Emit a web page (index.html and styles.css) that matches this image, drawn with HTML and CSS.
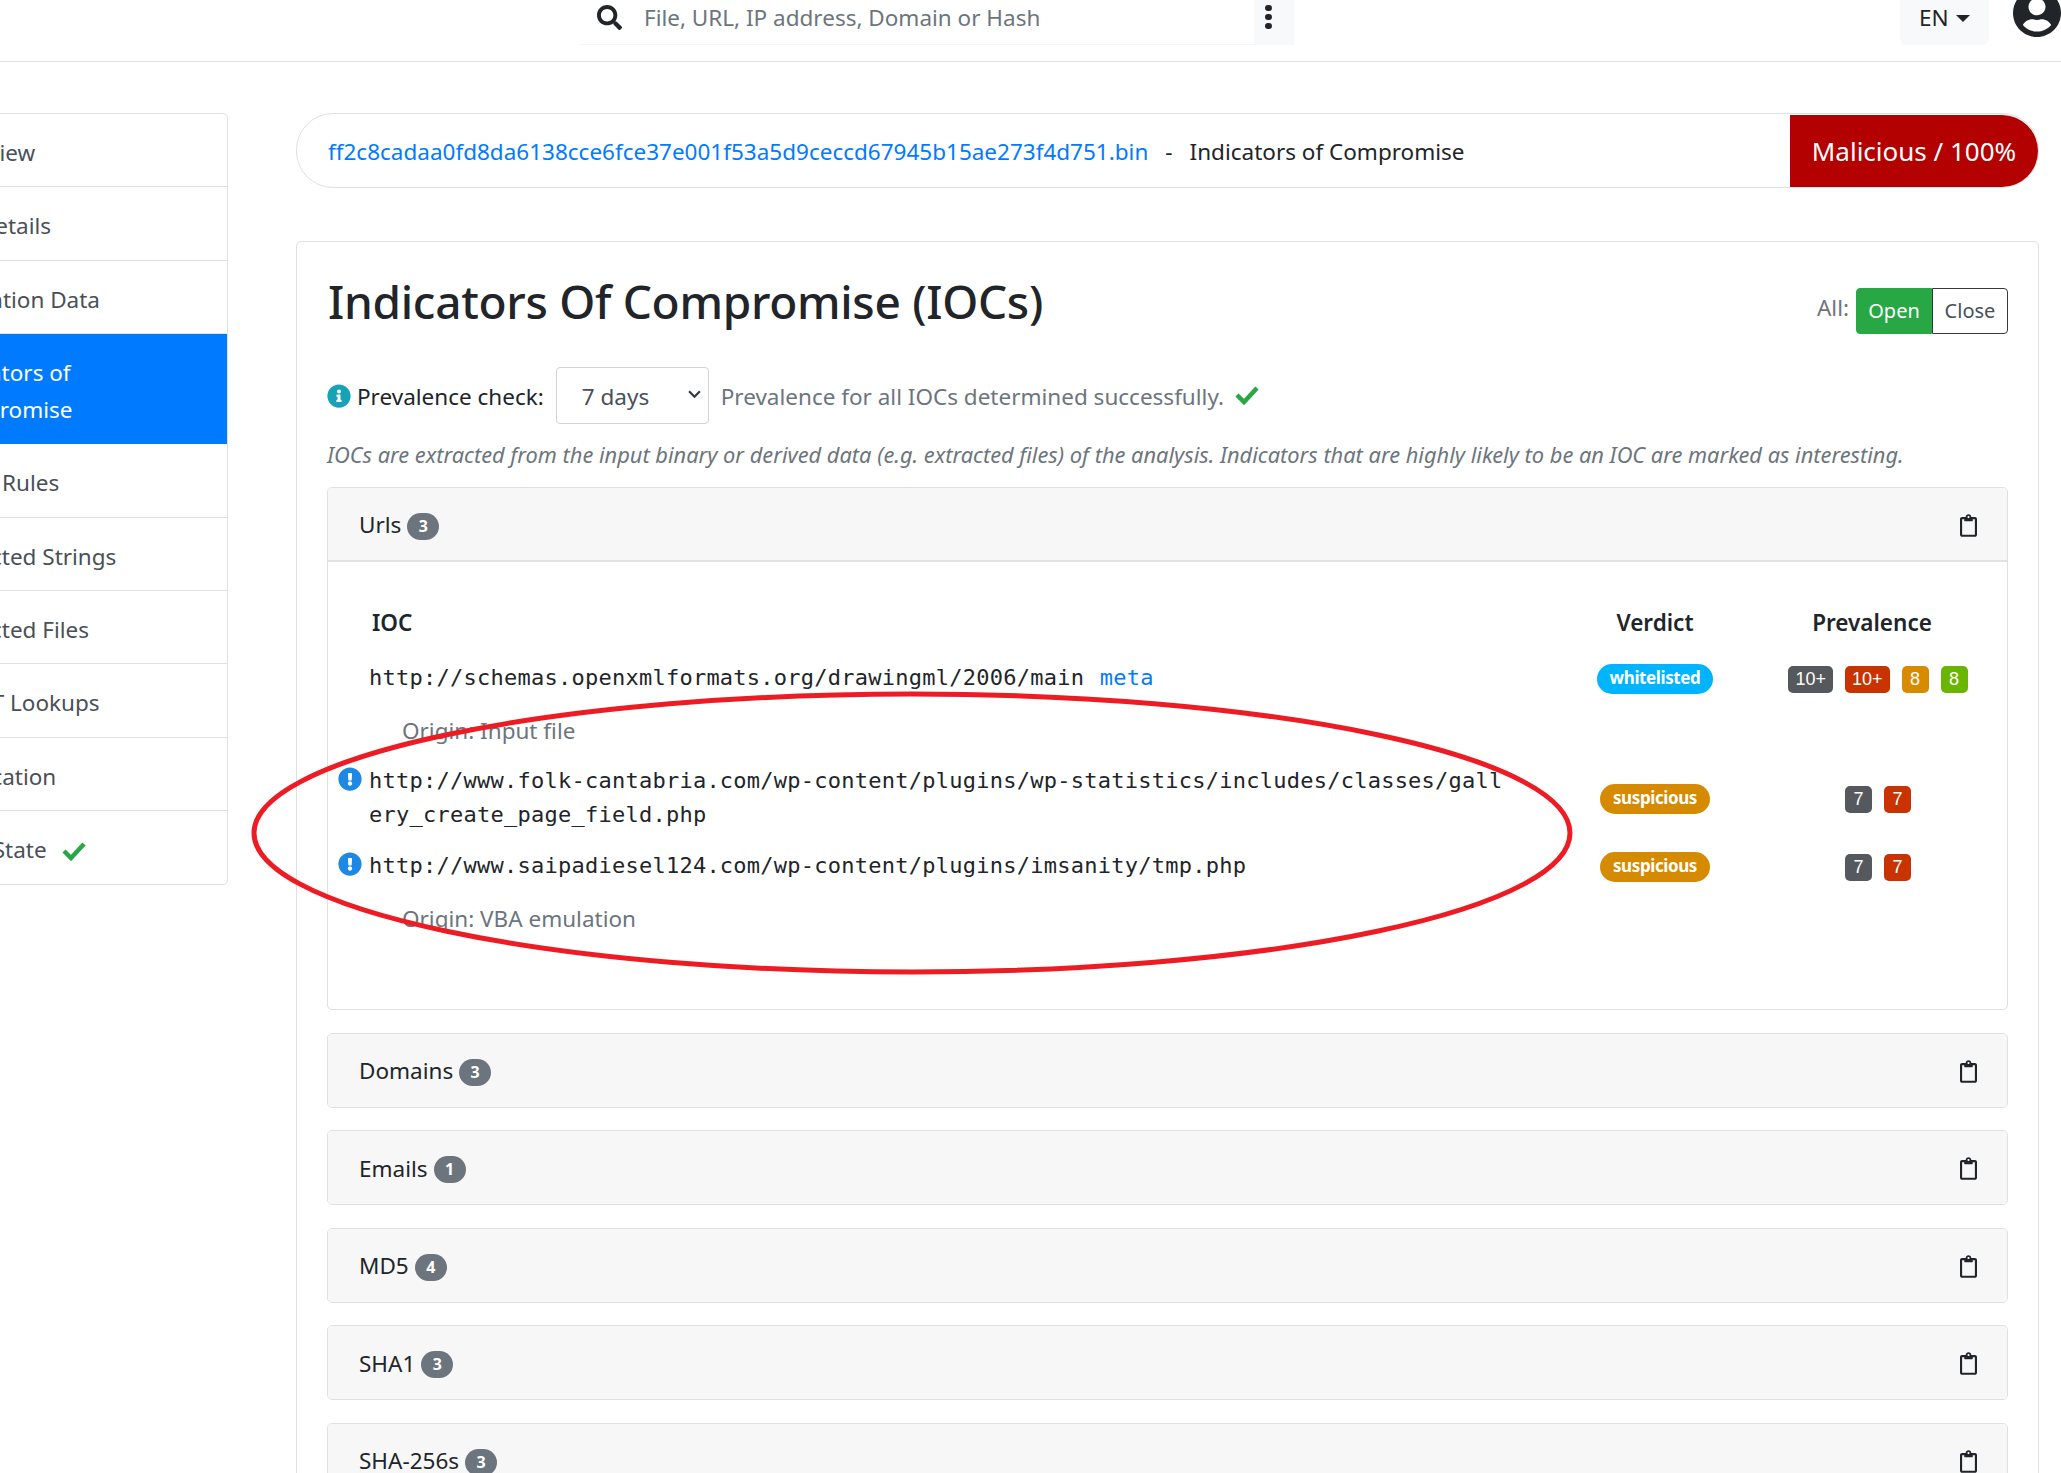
FILE: index.html
```html
<!DOCTYPE html>
<html lang="en">
<head>
<meta charset="utf-8">
<title>Indicators of Compromise</title>
<link rel="stylesheet" href="styles.css">
</head>
<body>
<header class="topbar">
  <div class="search">
    <svg class="search-icon" viewBox="0 0 512 512"><path d="M505 442.7L405.3 343c-4.5-4.5-10.6-7-17-7H372c27.6-35.3 44-79.7 44-128C416 93.1 322.9 0 208 0S0 93.1 0 208s93.1 208 208 208c48.3 0 92.7-16.4 128-44v16.3c0 6.4 2.5 12.5 7 17l99.7 99.7c9.4 9.4 24.6 9.4 33.9 0l28.3-28.3c9.4-9.4 9.4-24.6.1-34zM208 336c-70.7 0-128-57.2-128-128 0-70.7 57.2-128 128-128 70.7 0 128 57.2 128 128 0 70.7-57.2 128-128 128z"/></svg>
    <span class="search-text">File, URL, IP address, Domain or Hash</span>
    <span class="kebab"><i></i><i></i><i></i></span>
  </div>
  <div class="lang">EN<span class="caret"></span></div>
  <svg class="avatar" viewBox="0 0 496 512"><path d="M248 8C111 8 0 119 0 256s111 248 248 248 248-111 248-248S385 8 248 8zm0 96c48.6 0 88 39.4 88 88s-39.4 88-88 88-88-39.4-88-88 39.4-88 88-88zm0 344c-58.7 0-111.3-26.6-146.5-68.2 18.8-35.4 55.6-59.8 98.5-59.8 2.4 0 4.8.4 7.1 1.1 13 4.2 26.6 6.9 40.9 6.9 14.3 0 28-2.7 40.9-6.9 2.3-.7 4.7-1.1 7.1-1.1 42.9 0 79.7 24.4 98.5 59.8C359.3 421.4 306.7 448 248 448z"/></svg>
</header>

<div class="layout">
  <nav class="sidenav">
    <a class="nav-item">Overview</a>
    <a class="nav-item">File Details</a>
    <a class="nav-item">Emulation Data</a>
    <a class="nav-item active">Indicators of Compromise</a>
    <a class="nav-item nav-wide">YARA Rules</a>
    <a class="nav-item">Extracted Strings</a>
    <a class="nav-item">Extracted Files</a>
    <a class="nav-item">OSINT Lookups</a>
    <a class="nav-item">Verification</a>
    <a class="nav-item">Final State <svg class="check" viewBox="0 0 24 20"><polyline points="2,10 9,17 22,3"/></svg></a>
  </nav>

  <main class="content">
    <div class="crumb">
      <span class="crumb-text"><a class="link">ff2c8cadaa0fd8da6138cce6fce37e001f53a5d9ceccd67945b15ae273f4d751.bin</a><span class="sep">-</span>Indicators of Compromise</span>
      <span class="verdict-pill">Malicious / 100%</span>
    </div>

    <section class="panel">
      <div class="panel-head">
        <h1>Indicators Of Compromise (IOCs)</h1>
        <div class="all-toggle">
          <span class="all-label">All:</span>
          <span class="btn btn-open">Open</span><span class="btn btn-close">Close</span>
        </div>
      </div>

      <div class="prevalence">
        <svg class="info-icon" viewBox="0 0 512 512"><path d="M256 8C119.043 8 8 119.083 8 256c0 136.997 111.043 248 248 248s248-111.003 248-248C504 119.083 392.957 8 256 8zm0 110c23.196 0 42 18.804 42 42s-18.804 42-42 42-42-18.804-42-42 18.804-42 42-42zm56 254c0 6.627-5.373 12-12 12h-88c-6.627 0-12-5.373-12-12v-24c0-6.627 5.373-12 12-12h12v-64h-12c-6.627 0-12-5.373-12-12v-24c0-6.627 5.373-12 12-12h64c6.627 0 12 5.373 12 12v100h12c6.627 0 12 5.373 12 12v24z"/></svg>
        <span class="prev-label">Prevalence check:</span>
        <span class="select">7 days<svg class="chev" viewBox="0 0 12 8"><polyline points="1,1 6,6 11,1"/></svg></span>
        <span class="prev-note">Prevalence for all IOCs determined successfully.</span>
        <svg class="check check-lg" viewBox="0 0 24 20"><polyline points="2,10 9,17 22,3"/></svg>
      </div>

      <p class="intro">IOCs are extracted from the input binary or derived data (e.g. extracted files) of the analysis. Indicators that are highly likely to be an IOC are marked as interesting.</p>

      <div class="acc open">
        <div class="acc-head">
          <span class="acc-title">Urls<span class="count">3</span></span>
          <svg class="clip" viewBox="0 0 384 512"><path d="M336 64h-80c0-35.3-28.7-64-64-64s-64 28.7-64 64H48C21.5 64 0 85.5 0 112v352c0 26.5 21.5 48 48 48h288c26.5 0 48-21.5 48-48V112c0-26.5-21.5-48-48-48zM192 40c13.3 0 24 10.7 24 24s-10.7 24-24 24-24-10.7-24-24 10.7-24 24-24zm144 418c0 3.3-2.7 6-6 6H54c-3.3 0-6-2.7-6-6V118c0-3.3 2.7-6 6-6h42v36c0 6.6 5.4 12 12 12h168c6.6 0 12-5.4 12-12v-36h42c3.3 0 6 2.7 6 6z"/></svg>
        </div>
        <div class="acc-body">
          <div class="ioc-grid ioc-cols">
            <span></span>
            <span class="th th-ioc">IOC</span>
            <span class="th th-center">Verdict</span>
            <span class="th th-center th-prev">Prevalence</span>
          </div>

          <div class="ioc-row ioc-cols">
            <span></span>
            <span class="url">http://schemas.openxmlformats.org/drawingml/2006/main <a class="link meta">meta</a></span>
            <span class="cell"><span class="pill pill-blue">whitelisted</span></span>
            <span class="cell"><span class="tag tag-gray">10+</span><span class="tag tag-red">10+</span><span class="tag tag-orange">8</span><span class="tag tag-green">8</span></span>
          </div>
          <div class="origin">Origin: Input file</div>

          <div class="ioc-row ioc-cols">
            <svg class="warn-icon" viewBox="0 0 512 512"><path d="M504 256c0 136.997-111.043 248-248 248S8 392.997 8 256C8 119.083 119.043 8 256 8s248 111.083 248 248zm-248 50c-25.405 0-46 20.595-46 46s20.595 46 46 46 46-20.595 46-46-20.595-46-46-46zm-43.673-165.346l7.418 136c.347 6.364 5.609 11.346 11.982 11.346h48.546c6.373 0 11.635-4.982 11.982-11.346l7.418-136c.375-6.874-5.098-12.654-11.982-12.654h-63.383c-6.884 0-12.356 5.78-11.981 12.654z"/></svg>
            <span class="url">http://www.folk-cantabria.com/wp-content/plugins/wp-statistics/includes/classes/gallery_create_page_field.php</span>
            <span class="cell"><span class="pill pill-orange">suspicious</span></span>
            <span class="cell"><span class="tag tag-gray">7</span><span class="tag tag-red">7</span></span>
          </div>
          <div class="ioc-row ioc-cols">
            <svg class="warn-icon" viewBox="0 0 512 512"><path d="M504 256c0 136.997-111.043 248-248 248S8 392.997 8 256C8 119.083 119.043 8 256 8s248 111.083 248 248zm-248 50c-25.405 0-46 20.595-46 46s20.595 46 46 46 46-20.595 46-46-20.595-46-46-46zm-43.673-165.346l7.418 136c.347 6.364 5.609 11.346 11.982 11.346h48.546c6.373 0 11.635-4.982 11.982-11.346l7.418-136c.375-6.874-5.098-12.654-11.982-12.654h-63.383c-6.884 0-12.356 5.78-11.981 12.654z"/></svg>
            <span class="url">http://www.saipadiesel124.com/wp-content/plugins/imsanity/tmp.php</span>
            <span class="cell"><span class="pill pill-orange">suspicious</span></span>
            <span class="cell"><span class="tag tag-gray">7</span><span class="tag tag-red">7</span></span>
          </div>
          <div class="origin">Origin: VBA emulation</div>
        </div>
      </div>

      <div class="acc"><div class="acc-head"><span class="acc-title">Domains<span class="count">3</span></span><svg class="clip" viewBox="0 0 384 512"><path d="M336 64h-80c0-35.3-28.7-64-64-64s-64 28.7-64 64H48C21.5 64 0 85.5 0 112v352c0 26.5 21.5 48 48 48h288c26.5 0 48-21.5 48-48V112c0-26.5-21.5-48-48-48zM192 40c13.3 0 24 10.7 24 24s-10.7 24-24 24-24-10.7-24-24 10.7-24 24-24zm144 418c0 3.3-2.7 6-6 6H54c-3.3 0-6-2.7-6-6V118c0-3.3 2.7-6 6-6h42v36c0 6.6 5.4 12 12 12h168c6.6 0 12-5.4 12-12v-36h42c3.3 0 6 2.7 6 6z"/></svg></div></div>
      <div class="acc"><div class="acc-head"><span class="acc-title">Emails<span class="count">1</span></span><svg class="clip" viewBox="0 0 384 512"><path d="M336 64h-80c0-35.3-28.7-64-64-64s-64 28.7-64 64H48C21.5 64 0 85.5 0 112v352c0 26.5 21.5 48 48 48h288c26.5 0 48-21.5 48-48V112c0-26.5-21.5-48-48-48zM192 40c13.3 0 24 10.7 24 24s-10.7 24-24 24-24-10.7-24-24 10.7-24 24-24zm144 418c0 3.3-2.7 6-6 6H54c-3.3 0-6-2.7-6-6V118c0-3.3 2.7-6 6-6h42v36c0 6.6 5.4 12 12 12h168c6.6 0 12-5.4 12-12v-36h42c3.3 0 6 2.7 6 6z"/></svg></div></div>
      <div class="acc"><div class="acc-head"><span class="acc-title">MD5<span class="count">4</span></span><svg class="clip" viewBox="0 0 384 512"><path d="M336 64h-80c0-35.3-28.7-64-64-64s-64 28.7-64 64H48C21.5 64 0 85.5 0 112v352c0 26.5 21.5 48 48 48h288c26.5 0 48-21.5 48-48V112c0-26.5-21.5-48-48-48zM192 40c13.3 0 24 10.7 24 24s-10.7 24-24 24-24-10.7-24-24 10.7-24 24-24zm144 418c0 3.3-2.7 6-6 6H54c-3.3 0-6-2.7-6-6V118c0-3.3 2.7-6 6-6h42v36c0 6.6 5.4 12 12 12h168c6.6 0 12-5.4 12-12v-36h42c3.3 0 6 2.7 6 6z"/></svg></div></div>
      <div class="acc"><div class="acc-head"><span class="acc-title">SHA1<span class="count">3</span></span><svg class="clip" viewBox="0 0 384 512"><path d="M336 64h-80c0-35.3-28.7-64-64-64s-64 28.7-64 64H48C21.5 64 0 85.5 0 112v352c0 26.5 21.5 48 48 48h288c26.5 0 48-21.5 48-48V112c0-26.5-21.5-48-48-48zM192 40c13.3 0 24 10.7 24 24s-10.7 24-24 24-24-10.7-24-24 10.7-24 24-24zm144 418c0 3.3-2.7 6-6 6H54c-3.3 0-6-2.7-6-6V118c0-3.3 2.7-6 6-6h42v36c0 6.6 5.4 12 12 12h168c6.6 0 12-5.4 12-12v-36h42c3.3 0 6 2.7 6 6z"/></svg></div></div>
      <div class="acc"><div class="acc-head"><span class="acc-title">SHA-256s<span class="count">3</span></span><svg class="clip" viewBox="0 0 384 512"><path d="M336 64h-80c0-35.3-28.7-64-64-64s-64 28.7-64 64H48C21.5 64 0 85.5 0 112v352c0 26.5 21.5 48 48 48h288c26.5 0 48-21.5 48-48V112c0-26.5-21.5-48-48-48zM192 40c13.3 0 24 10.7 24 24s-10.7 24-24 24-24-10.7-24-24 10.7-24 24-24zm144 418c0 3.3-2.7 6-6 6H54c-3.3 0-6-2.7-6-6V118c0-3.3 2.7-6 6-6h42v36c0 6.6 5.4 12 12 12h168c6.6 0 12-5.4 12-12v-36h42c3.3 0 6 2.7 6 6z"/></svg></div></div>
    </section>
  </main>
</div>

<svg class="annotation" viewBox="0 0 2061 1473"><ellipse cx="912" cy="833" rx="658" ry="139"/></svg>
</body>
</html>
```

FILE: styles.css
```css
* { box-sizing: border-box; }
html, body { margin: 0; height: 1473px; overflow: hidden; background: #fff; }
body {
  position: relative;
  font-family: "Noto Sans", "Open Sans", sans-serif;
  font-size: 22.5px;
  line-height: 34px;
  color: #212529;
}

/* top bar */
.topbar {
  height: 62px;
  border-bottom: 1px solid #e2e2e2;
  display: flex;
  align-items: flex-start;
  padding-left: 579px;
}
.search {
  width: 715px;
  height: 45px;
  display: flex;
  align-items: center;
  border-bottom: 1px solid #f6f6f6;
  position: relative;
}
.search-icon { width: 25px; height: 25px; margin: -9px 0 0 18px; fill: #212529; flex: none; }
.search-text { margin: -9px 0 0 22px; color: #6c757d; flex: 1; }
.kebab {
  width: 40px;
  height: 45px;
  background: #f8f9fa;
  border-radius: 0 0 4px 4px;
  display: flex;
  flex-direction: column;
  align-items: flex-start;
  padding: 5px 0 0 11px;
  gap: 2.5px;
}
.kebab i { width: 6.5px; height: 6.5px; border-radius: 50%; background: #212529; }
.lang {
  margin-left: 606px;
  width: 89px;
  height: 45px;
  background: #f8f9fa;
  border-radius: 0 0 6px 6px;
  display: flex;
  align-items: center;
  padding: 0 0 9px 19px;
  color: #212529;
}
.caret {
  margin-left: 7px;
  border-top: 7px solid #212529;
  border-left: 7px solid transparent;
  border-right: 7px solid transparent;
}
.avatar { width: 48px; height: 50px; margin: -12px 0 0 24px; fill: #212529; flex: none; }

/* layout */
.layout { display: flex; align-items: flex-start; padding-top: 51px; }
.sidenav {
  width: 318px;
  margin-left: -90px;
  flex: none;
  border: 1px solid #e0e0e0;
  border-radius: 5px;
  display: flex;
  flex-direction: column;
  overflow: hidden;
}
.nav-item {
  display: block;
  padding: 22px 30px 16.4px 26px;
  color: #495057;
  border-bottom: 1px solid #e0e0e0;
  width: 100%;
}
.nav-item:last-child { border-bottom: 0; }
.nav-wide { word-spacing: 5px; }
.nav-item.active {
  background: #007bff;
  color: #fff;
  border-bottom: 0;
  padding-right: 80px;
  padding-top: 21px;
  padding-bottom: 16px;
  line-height: 36.5px;
}
.check { width: 24px; height: 20px; fill: none; stroke: #28a745; stroke-width: 4.5; vertical-align: -3px; margin-left: 10px; }
.content { width: 1743px; margin-left: 68px; flex: none; }
.link { color: #007bff; }

.crumb {
  height: 75px;
  border: 1px solid #e0e0e0;
  border-radius: 37px;
  display: flex;
  justify-content: space-between;
  align-items: center;
  padding-left: 31px;
}
.crumb-text { padding-top: 2px; }
.sep { margin: 0 17px; }
.verdict-pill {
  width: 248px;
  height: 72px;
  margin-top: 1px;
  background: #b30000;
  color: #fff;
  font-size: 26px;
  border-radius: 0 36px 36px 0;
  display: flex;
  align-items: center;
  justify-content: center;
}

/* panel */
.panel {
  margin-top: 53px;
  border: 1px solid #e0e0e0;
  border-radius: 5px;
  padding: 0 30px;
  height: 1300px;
}
.panel-head { display: flex; justify-content: space-between; align-items: flex-start; padding-top: 29px; }
h1 { margin: 0 0 0 1px; font-size: 46px; line-height: 60px; font-weight: 500; color: #212529; letter-spacing: -0.3px; }
.all-toggle { display: flex; align-items: center; margin-top: 17px; color: #6c757d; }
.all-label { margin-right: 7px; margin-top: -6px; }
.btn {
  height: 46px;
  width: 76px;
  display: flex;
  align-items: center;
  justify-content: center;
  font-size: 20px;
  border: 1px solid #343a40;
}
.btn-open { background: #28a745; color: #fff; border-color: #28a745; border-radius: 4px 0 0 4px; }
.btn-close { color: #495057; border-left-color: #343a40; border-radius: 0 4px 4px 0; }

.prevalence { display: flex; align-items: center; margin-top: 33px; height: 57px; }
.info-icon { width: 24px; height: 24px; fill: #17a2b8; flex: none; margin-right: 6px; }
.prev-label { flex: none; padding-top: 2px; }
.select {
  width: 153px;
  height: 57px;
  margin-left: 12px;
  border: 1px solid #ced4da;
  border-radius: 4px;
  padding: 2px 7px 0 25px;
  color: #495057;
  display: flex;
  align-items: center;
  justify-content: space-between;
}
.chev { width: 13px; height: 9px; fill: none; stroke: #343a40; stroke-width: 2; margin-top: -4px; }
.prev-note { margin-left: 12px; color: #6c757d; padding-top: 2px; }
.check-lg { margin-left: 11px; margin-top: -2px; }
.intro { margin: 15px 0 0; color: #6c757d; font-size: 21.8px; font-style: italic; height: 31px; line-height: 31px; }

/* accordion */
.acc {
  margin-top: 22.5px;
  border: 1px solid #e0e0e0;
  border-radius: 5px;
  overflow: hidden;
}
.acc.open { margin-top: 17px; }
.acc-head {
  height: 73px;
  padding: 2px 30px 0 31px;
  background: #f7f7f7;
  display: flex;
  align-items: center;
  justify-content: space-between;
}
.acc.open .acc-head { height: 74px; border-bottom: 2px solid #e2e2e2; }
.acc-title { display: flex; align-items: center; }
.count {
  margin-left: 6px;
  margin-top: 2px;
  width: 32px;
  height: 27px;
  border-radius: 14px;
  background: #6c757d;
  color: #fff;
  font-size: 16px;
  font-weight: 700;
  line-height: 27px;
  text-align: center;
}
.clip { width: 17px; height: 23px; fill: #212529; }

.acc-body { padding: 36px 0 57px 10px; }
.ioc-cols { display: grid; grid-template-columns: 31px 1191px 190px 256px; }
.ioc-grid { height: 50px; align-items: center; margin-bottom: 13px; }
.th { font-weight: 600; }
.th-ioc { padding-left: 3px; }
.th-center { text-align: center; }
.th-prev { padding-right: 12px; }
.url {
  font-family: "DejaVu Sans Mono", "Liberation Mono", monospace;
  font-size: 22px;
  letter-spacing: 0.25px;
  word-break: break-all;
  padding-right: 51px;
  color: #212529;
}
.meta { margin-left: 2px; }
.ioc-row + .ioc-row { margin-top: 17px; }
.warn-icon { width: 24px; height: 24px; fill: #1e88e5; margin-top: 3px; }
.origin { margin: 19px 0 16px 64px; color: #6c757d; }
.cell { display: flex; justify-content: center; align-items: center; gap: 12px; padding-top: 2px; align-self: center; }
.pill {
  height: 30px;
  border-radius: 15px;
  color: #fff;
  font-size: 17px;
  font-weight: 700;
  line-height: 28px;
  letter-spacing: -0.4px;
  text-align: center;
}
.pill-blue { width: 116px; background: #00b4ff; }
.pill-orange { width: 110px; background: #d68a00; }
.tag {
  height: 27px;
  min-width: 27px;
  padding: 0 7px;
  border-radius: 5px;
  color: #fff;
  font-family: "Liberation Sans", sans-serif;
  font-size: 18px;
  line-height: 27px;
  text-align: center;
}
.tag-gray { background: #55595e; }
.tag-red { background: #c83300; }
.tag-orange { background: #d98b00; }
.tag-green { background: #6ab500; }

.annotation {
  position: absolute;
  left: 0;
  top: 0;
  width: 2061px;
  height: 1473px;
  pointer-events: none;
}
.annotation ellipse { fill: none; stroke: #ed1c24; stroke-width: 5; }
```
